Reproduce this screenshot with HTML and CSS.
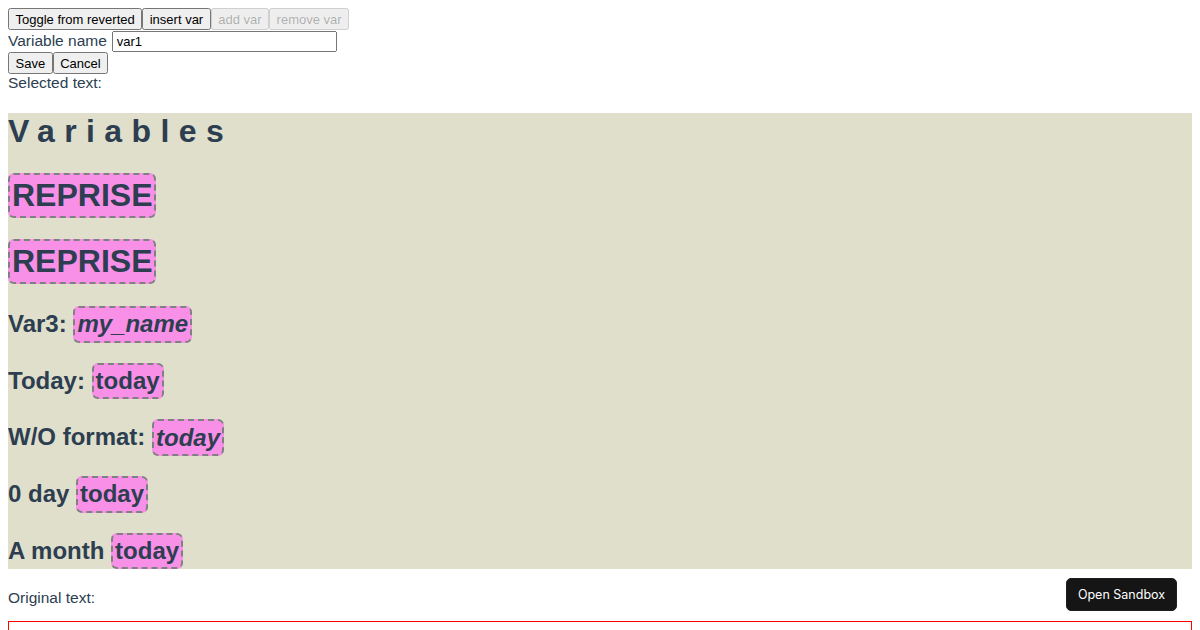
FILE: index.html
```html
<!DOCTYPE html>
<html>
<head>
<meta charset="utf-8">
<link rel="stylesheet" href="styles.css">
</head>
<body>
<div class="app">
  <div class="toolbar"><button class="btn">Toggle from reverted</button><button class="btn">insert var</button><button class="btn" disabled>add var</button><button class="btn" disabled>remove var</button></div>
  <div class="field"><span>Variable name</span><input class="name-input" type="text" value="var1"></div>
  <div class="toolbar"><button class="btn">Save</button><button class="btn">Cancel</button></div>
  <div class="label">Selected text:</div>
  <div class="doc">
    <h1 class="title">Variables</h1>
    <h1 class="big"><span class="var">REPRISE</span></h1>
    <h1 class="big"><span class="var">REPRISE</span></h1>
    <h2 class="line">Var3: <span class="var italic">my_name</span></h2>
    <h2 class="line">Today: <span class="var">today</span></h2>
    <h2 class="line">W/O format: <span class="var italic">today</span></h2>
    <h2 class="line">0 day <span class="var">today</span></h2>
    <h2 class="line">A month <span class="var">today</span></h2>
  </div>
  <div class="label">Original text:</div>
  <div class="original"></div>
</div>
<button class="sandbox">Open Sandbox</button>
</body>
</html>
```
FILE: styles.css
```css
html, body {
  background: #ffffff;
}
body {
  margin: 8px;
  font-family: "Liberation Sans", Arial, Helvetica, sans-serif;
  font-size: 15.5px;
  color: #2c3e50;
}
.toolbar {
  display: flex;
  height: 22px;
}
.btn {
  font-family: "Liberation Sans", Arial, sans-serif;
  font-size: 13px;
  height: 22px;
  padding: 0 5.5px;
}
.field {
  display: flex;
  align-items: center;
  gap: 5px;
  height: 22px;
}
.name-input {
  font-family: "Liberation Sans", Arial, sans-serif;
  font-size: 13px;
  height: 21px;
  box-sizing: border-box;
  width: 225px;
  padding: 1px 3px;
}
.label {
  height: 18px;
  line-height: 18px;
}
.doc {
  background: #e0dfcb;
}
.title {
  font-size: 32px;
  letter-spacing: 9.4px;
  margin-bottom: 22.5px;
}
.big {
  font-size: 32px;
}
.line {
  font-size: 24px;
}
.var {
  display: inline-block;
  background: #f990e7;
  border: 2px dashed #808080;
  border-radius: 6px;
  padding: 2px;
}
.line .var {
  padding: 2.4px 2px;
}
.italic {
  font-style: italic;
}
.original {
  margin-top: 14px;
  border: 1px solid #ff0000;
  height: 40px;
}
.sandbox {
  position: fixed;
  right: 23px;
  bottom: 19px;
  width: 111px;
  height: 33px;
  background: #151515;
  color: #ffffff;
  border: 1px solid #1f1f1f;
  border-radius: 5px;
  font-family: Inter, "Liberation Sans", sans-serif;
  font-size: 12.5px;
  padding: 0;
}
```
